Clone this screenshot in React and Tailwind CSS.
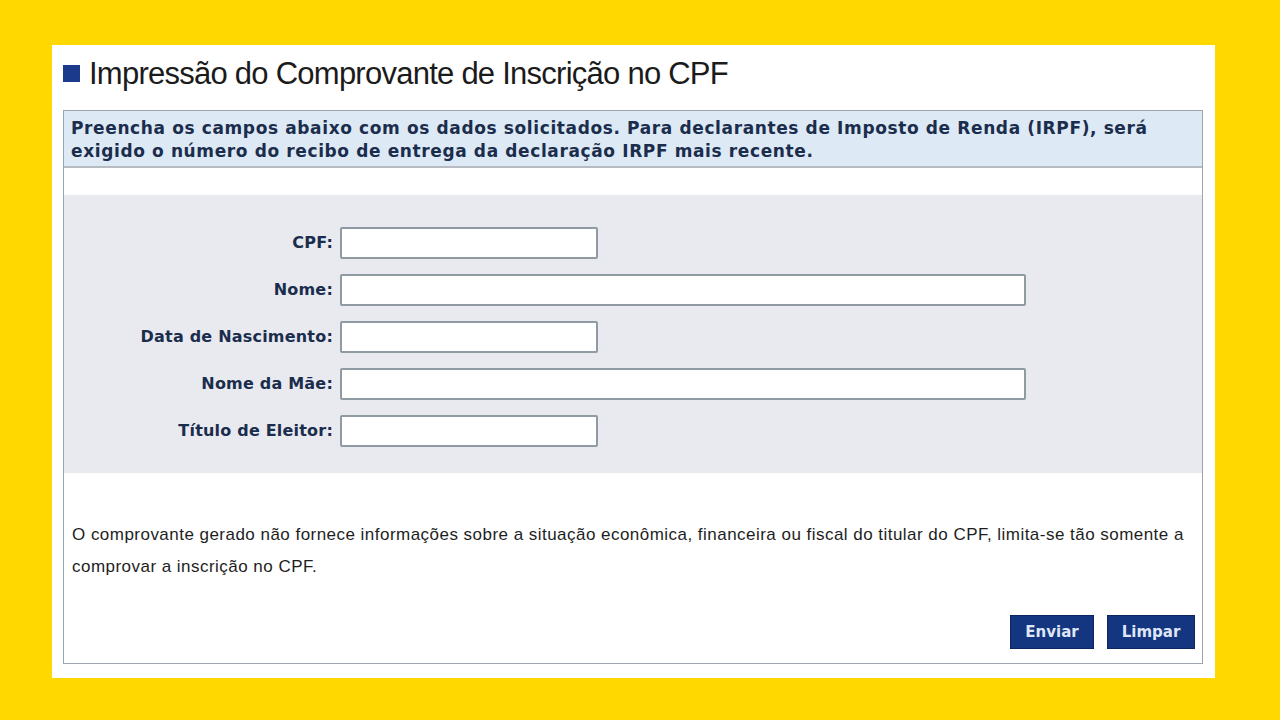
export default function App() {
  const rows = [
    { label: "CPF:", w: "w-[258px]" },
    { label: "Nome:", w: "w-[686px]" },
    { label: "Data de Nascimento:", w: "w-[258px]" },
    { label: "Nome da Mãe:", w: "w-[686px]" },
    { label: "Título de Eleitor:", w: "w-[258px]" },
  ];

  return (
    <div className="w-[1280px] h-[720px] bg-[#ffd800] pt-[45px] pl-[52px]">
      <div className="w-[1163px] h-[633px] bg-white pl-[11px] pt-[8px]">
        {/* title */}
        <div className="flex items-center h-[40px] font-['Liberation_Sans',Arial,sans-serif]">
          <span className="w-[17px] h-[17px] bg-[#1c3a8c] mr-[9px]"></span>
          <h1 className="text-[31px] tracking-[-0.75px] text-[#1b1b1b] leading-none">
            Impressão do Comprovante de Inscrição no CPF
          </h1>
        </div>

        {/* box */}
        <div className="mt-[17px] w-[1140px] h-[554px] border border-[#9ea4ab] flex flex-col">
          <div className="h-[57px] bg-[#dde9f4] border-b-2 border-[#b7bcc2] px-[7px] pt-[6px] font-['DejaVu_Sans',Verdana,sans-serif] font-bold text-[17px] leading-[23px] text-[#1b2d4c] tracking-[0.62px] whitespace-nowrap">
            Preencha os campos abaixo com os dados solicitados. Para declarantes de Imposto de Renda (IRPF), será
            <br />
            exigido o número do recibo de entrega da declaração IRPF mais recente.
          </div>

          <div className="h-[27px]"></div>

          <div className="h-[278px] bg-[#e8eaf0] pt-[32px] flex flex-col gap-[15px]">
            {rows.map((r) => (
              <div key={r.label} className="flex items-center h-[32px]">
                <label className="w-[276px] text-right pr-[7px] font-['DejaVu_Sans',Verdana,sans-serif] font-bold text-[16px] text-[#1b2d4c] tracking-[0.2px] whitespace-nowrap">
                  {r.label}
                </label>
                <input
                  type="text"
                  className={`${r.w} h-[32px] bg-white border-2 border-[#8f9aa3] rounded-[2px] outline-none`}
                />
              </div>
            ))}
          </div>

          <div className="px-[8px] pt-[46px] font-['Liberation_Sans',Arial,sans-serif] text-[17px] leading-[32px] text-[#1e1e1e] tracking-[0.47px] whitespace-nowrap">
            O comprovante gerado não fornece informações sobre a situação econômica, financeira ou fiscal do titular do CPF, limita-se tão somente a
            <br />
            comprovar a inscrição no CPF.
          </div>

          <div className="flex justify-end gap-[13px] pr-[7px] mt-auto mb-[14px]">
            <button className="w-[84px] h-[34px] bg-[#143580] text-[#dfe6f5] font-['DejaVu_Sans',Verdana,sans-serif] font-bold text-[15px] border border-[#0c2460]">
              Enviar
            </button>
            <button className="w-[88px] h-[34px] bg-[#143580] text-[#dfe6f5] font-['DejaVu_Sans',Verdana,sans-serif] font-bold text-[15px] border border-[#0c2460]">
              Limpar
            </button>
          </div>
        </div>
      </div>
    </div>
  );
}
